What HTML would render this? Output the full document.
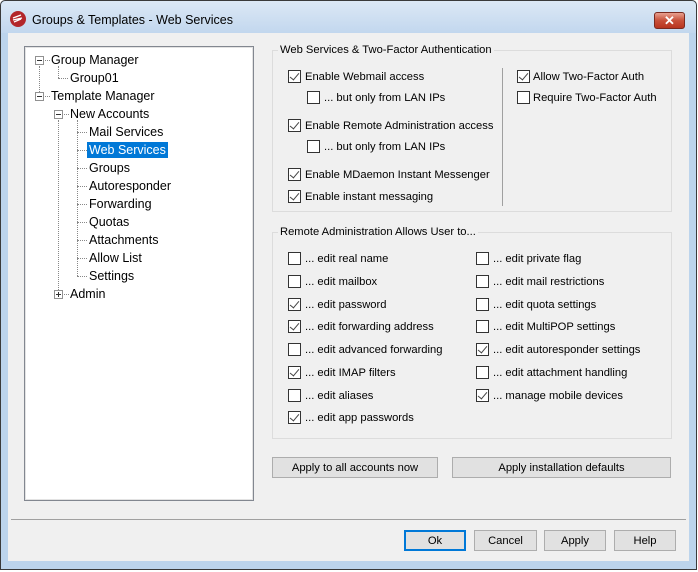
<!DOCTYPE html>
<html><head><meta charset="utf-8"><style>
*{margin:0;padding:0;box-sizing:border-box}
body{width:698px;height:572px;background:#fff;font-family:"Liberation Sans",sans-serif;font-size:11.2px;color:#000;position:relative;overflow:hidden}
.a{position:absolute}
.win{left:0;top:0;width:697px;height:570px;border:1px solid #3a3a3a;border-radius:5px 5px 0 0;background:#bcd4ec}
.title{left:1px;top:1px;width:695px;height:32px;background:linear-gradient(#dce8f5,#c2d7ee);border-radius:5px 5px 0 0}
.client{left:8px;top:33px;width:681px;height:528px;background:#f0f0f0}
.tree{left:24px;top:46px;width:230px;height:455px;background:#fff;border:1px solid #828790;box-shadow:inset 0 0 0 1px #e3e3e3}
.ti{position:absolute;font-size:12.5px;white-space:nowrap;line-height:16px}
.sel{background:#0078d7;color:#fff;padding:0 2px}
.exp{position:absolute;width:9px;height:9px;border:1px solid #919191;background:#fff}
.exp:before{content:"";position:absolute;left:1px;top:3px;width:5px;height:1px;background:#333}
.plus:after{content:"";position:absolute;left:3px;top:1px;width:1px;height:5px;background:#333}
.hd{position:absolute;border-top:1px dotted #888;height:0}
.vd{position:absolute;border-left:1px dotted #888;width:0}
.grp{position:absolute;border:1px solid #dcdcdc}
.gl{position:absolute;background:#f0f0f0;padding:0 2px;white-space:nowrap}
.cb{position:absolute;width:13px;height:13px;border:1px solid #333;background:#fff}
.cb.c:after{content:"";position:absolute;left:3px;top:0px;width:4px;height:8px;border:solid #444;border-width:0 1.5px 1.5px 0;transform:rotate(40deg)}
.lb{position:absolute;white-space:nowrap;line-height:14px;top:auto}
.btn{position:absolute;height:21px;border:1px solid #adadad;background:#e1e1e1;text-align:center;line-height:20px;font-size:11.2px}
</style></head><body>
<div class="a win"></div>
<div class="a title"></div>
<svg class="a" style="left:9px;top:10px" width="18" height="18" viewBox="0 0 18 18"><circle cx="9" cy="9" r="8" fill="#b3262a"/><path d="M4 8l8-3M4 10l9-2M5 12l7-3" stroke="#fff" stroke-width="1.3"/></svg>
<div class="a" style="left:32px;top:13px;font-size:12.5px">Groups &amp; Templates - Web Services</div>
<div class="a" style="left:654px;top:12px;width:31px;height:17px;border:1px solid #7a2a20;border-radius:3px;background:linear-gradient(#e8a090,#c8503a 50%,#b8341f);color:#fff;text-align:center;font-weight:bold;font-size:13px;line-height:15px">✕</div>
<div class="a client"></div>
<div class="a tree"></div>
<div class="vd" style="left:39px;top:66px;height:30px"></div>
<div class="vd" style="left:58px;top:66px;height:12px"></div>
<div class="vd" style="left:58px;top:120px;height:174px"></div>
<div class="vd" style="left:77px;top:120px;height:156px"></div>
<div class="hd" style="left:45px;top:60px;width:5px"></div>
<div class="hd" style="left:45px;top:96px;width:5px"></div>
<div class="hd" style="left:58px;top:78px;width:10px"></div>
<div class="hd" style="left:64px;top:114px;width:5px"></div>
<div class="hd" style="left:64px;top:294px;width:5px"></div>
<div class="hd" style="left:77px;top:132px;width:10px"></div>
<div class="hd" style="left:77px;top:150px;width:10px"></div>
<div class="hd" style="left:77px;top:168px;width:10px"></div>
<div class="hd" style="left:77px;top:186px;width:10px"></div>
<div class="hd" style="left:77px;top:204px;width:10px"></div>
<div class="hd" style="left:77px;top:222px;width:10px"></div>
<div class="hd" style="left:77px;top:240px;width:10px"></div>
<div class="hd" style="left:77px;top:258px;width:10px"></div>
<div class="hd" style="left:77px;top:276px;width:10px"></div>
<div class="exp" style="left:35px;top:56px"></div>
<div class="exp" style="left:35px;top:92px"></div>
<div class="exp" style="left:54px;top:110px"></div>
<div class="exp plus" style="left:54px;top:290px"></div>
<div class="ti" style="left:51px;top:52px">Group Manager</div>
<div class="ti" style="left:70px;top:70px">Group01</div>
<div class="ti" style="left:51px;top:88px">Template Manager</div>
<div class="ti" style="left:70px;top:106px">New Accounts</div>
<div class="ti" style="left:89px;top:124px">Mail Services</div>
<div class="ti sel" style="left:87px;top:142px">Web Services</div>
<div class="ti" style="left:89px;top:160px">Groups</div>
<div class="ti" style="left:89px;top:178px">Autoresponder</div>
<div class="ti" style="left:89px;top:196px">Forwarding</div>
<div class="ti" style="left:89px;top:214px">Quotas</div>
<div class="ti" style="left:89px;top:232px">Attachments</div>
<div class="ti" style="left:89px;top:250px">Allow List</div>
<div class="ti" style="left:89px;top:268px">Settings</div>
<div class="ti" style="left:70px;top:286px">Admin</div>

<div class="grp" style="left:272px;top:50px;width:400px;height:162px"></div>
<div class="gl" style="left:278px;top:44px">Web Services &amp; Two-Factor Authentication</div>
<div class="a" style="left:502px;top:68px;width:1px;height:138px;background:#a0a0a0"></div>
<div class="cb c" style="left:288px;top:70px"></div><div class="lb" style="left:305px;top:70px">Enable Webmail access</div>
<div class="cb" style="left:307px;top:91px"></div><div class="lb" style="left:324px;top:91px">... but only from LAN IPs</div>
<div class="cb c" style="left:288px;top:119px"></div><div class="lb" style="left:305px;top:119px">Enable Remote Administration access</div>
<div class="cb" style="left:307px;top:140px"></div><div class="lb" style="left:324px;top:140px">... but only from LAN IPs</div>
<div class="cb c" style="left:288px;top:168px"></div><div class="lb" style="left:305px;top:168px">Enable MDaemon Instant Messenger</div>
<div class="cb c" style="left:288px;top:190px"></div><div class="lb" style="left:305px;top:190px">Enable instant messaging</div>
<div class="cb c" style="left:517px;top:70px"></div><div class="lb" style="left:533px;top:70px">Allow Two-Factor Auth</div>
<div class="cb" style="left:517px;top:91px"></div><div class="lb" style="left:533px;top:91px">Require Two-Factor Auth</div>

<div class="grp" style="left:272px;top:232px;width:400px;height:207px"></div>
<div class="gl" style="left:278px;top:226px">Remote Administration Allows User to...</div>
<div class="cb" style="left:288px;top:252px"></div><div class="lb" style="left:305px;top:252px">... edit real name</div>
<div class="cb" style="left:288px;top:275px"></div><div class="lb" style="left:305px;top:275px">... edit mailbox</div>
<div class="cb c" style="left:288px;top:298px"></div><div class="lb" style="left:305px;top:298px">... edit password</div>
<div class="cb c" style="left:288px;top:320px"></div><div class="lb" style="left:305px;top:320px">... edit forwarding address</div>
<div class="cb" style="left:288px;top:343px"></div><div class="lb" style="left:305px;top:343px">... edit advanced forwarding</div>
<div class="cb c" style="left:288px;top:366px"></div><div class="lb" style="left:305px;top:366px">... edit IMAP filters</div>
<div class="cb" style="left:288px;top:389px"></div><div class="lb" style="left:305px;top:389px">... edit aliases</div>
<div class="cb c" style="left:288px;top:411px"></div><div class="lb" style="left:305px;top:411px">... edit app passwords</div>
<div class="cb" style="left:476px;top:252px"></div><div class="lb" style="left:493px;top:252px">... edit private flag</div>
<div class="cb" style="left:476px;top:275px"></div><div class="lb" style="left:493px;top:275px">... edit mail restrictions</div>
<div class="cb" style="left:476px;top:298px"></div><div class="lb" style="left:493px;top:298px">... edit quota settings</div>
<div class="cb" style="left:476px;top:320px"></div><div class="lb" style="left:493px;top:320px">... edit MultiPOP settings</div>
<div class="cb c" style="left:476px;top:343px"></div><div class="lb" style="left:493px;top:343px">... edit autoresponder settings</div>
<div class="cb" style="left:476px;top:366px"></div><div class="lb" style="left:493px;top:366px">... edit attachment handling</div>
<div class="cb c" style="left:476px;top:389px"></div><div class="lb" style="left:493px;top:389px">... manage mobile devices</div>

<div class="btn" style="left:272px;top:457px;width:166px">Apply to all accounts now</div>
<div class="btn" style="left:452px;top:457px;width:219px">Apply installation defaults</div>

<div class="a" style="left:11px;top:519px;width:675px;height:1px;background:#a0a0a0"></div>
<div class="btn" style="left:404px;top:530px;width:62px;border:2px solid #0078d7;line-height:18px">Ok</div>
<div class="btn" style="left:474px;top:530px;width:63px">Cancel</div>
<div class="btn" style="left:544px;top:530px;width:62px">Apply</div>
<div class="btn" style="left:614px;top:530px;width:62px">Help</div>
</body></html>
